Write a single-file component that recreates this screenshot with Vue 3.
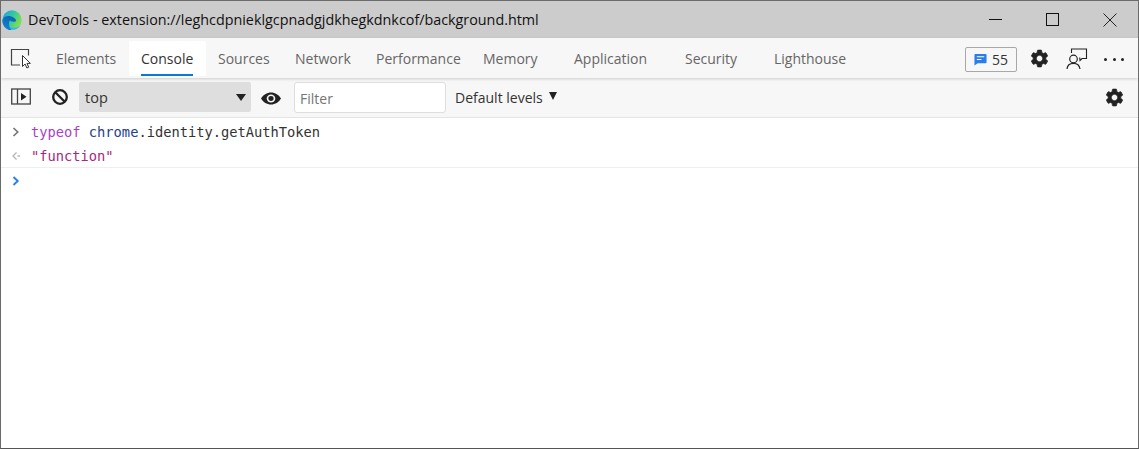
<script setup>
const tabs = [
  { name: 'Elements', width: 85 },
  { name: 'Console', width: 77, active: true },
  { name: 'Sources', width: 77 },
  { name: 'Network', width: 81 },
  { name: 'Performance', width: 107 },
  { name: 'Memory', width: 91 },
  { name: 'Application', width: 111 },
  { name: 'Security', width: 89 },
  { name: 'Lighthouse', width: 100 },
]
const gearPath = 'M19.14 12.94c.04-.3.06-.61.06-.94 0-.32-.02-.64-.07-.94l2.03-1.58c.18-.14.23-.41.12-.61l-1.92-3.32c-.12-.22-.37-.29-.59-.22l-2.39.96c-.5-.38-1.03-.7-1.62-.94l-.36-2.54c-.04-.24-.24-.41-.48-.41h-3.84c-.24 0-.43.17-.47.41l-.36 2.54c-.59.24-1.13.57-1.62.94l-2.39-.96c-.22-.08-.47 0-.59.22L2.74 8.87c-.12.21-.08.47.12.61l2.03 1.58c-.05.3-.09.63-.09.94s.02.64.07.94l-2.03 1.58c-.18.14-.23.41-.12.61l1.92 3.32c.12.22.37.29.59.22l2.39-.96c.5.38 1.03.7 1.62.94l.36 2.54c.05.24.24.41.48.41h3.84c.24 0 .44-.17.47-.41l.36-2.54c.59-.24 1.13-.56 1.62-.94l2.39.96c.22.08.47 0 .59-.22l1.92-3.32c.12-.22.07-.47-.12-.61l-2.01-1.58zM12 15.6c-1.98 0-3.6-1.62-3.6-3.6s1.62-3.6 3.6-3.6 3.6 1.62 3.6 3.6-1.62 3.6-3.6 3.6z'
</script>

<template>
  <div class="window">
    <header class="titlebar">
      <svg class="edge" viewBox="0 0 20 20" width="20" height="20">
        <defs>
          <linearGradient id="edgeGreen" x1="0.1" y1="0.1" x2="0.95" y2="0.55">
            <stop offset="0" stop-color="#1fa6d8" />
            <stop offset="0.5" stop-color="#35c9a0" />
            <stop offset="1" stop-color="#7ede4e" />
          </linearGradient>
          <linearGradient id="edgeBlue" x1="0.7" y1="0" x2="0.2" y2="1">
            <stop offset="0" stop-color="#0c62b0" />
            <stop offset="1" stop-color="#1086d8" />
          </linearGradient>
        </defs>
        <circle cx="10" cy="10" r="9.700" fill="url(#edgeGreen)" />
        <path d="M.4 10.500C1.200 7 5 5.500 8.500 6.300c2.800.6 5.200 2.400 5.500 4.200.2 1.100-1.400 1.300-2.900 1.200-1.600-.1-2.900-.6-3-1.500-.6.8-1.400 2.400-1 4.600.4 2.300 1.600 4 3 5.800C4.500 20.500.2 16 .4 10.500z" fill="url(#edgeBlue)" />
        <path d="M10.600 19.700c-2-1-3.300-2.300-4-4.200 1.800 1.800 4.500 2.600 7 2.200 1.900-.3 3.700-1.300 5-2.800-1.500 3-4.500 4.900-8 4.800z" fill="#35b4ee" />
      </svg>
      <span class="title">DevTools - extension://leghcdpnieklgcpnadgjdkhegkdnkcof/background.html</span>
      <div class="winbtns">
        <svg viewBox="0 0 14 14" width="14" height="14"><path d="M0 6.500h13" stroke="#111" fill="none" /></svg>
        <svg viewBox="0 0 14 14" width="14" height="14"><rect x=".5" y=".5" width="12" height="12" stroke="#111" fill="none" /></svg>
        <svg viewBox="0 0 14 14" width="14" height="14"><path d="M.5 .5l13 13M13.500 .5l-13 13" stroke="#222" fill="none" /></svg>
      </div>
    </header>

    <nav class="tabbar">
      <svg class="inspect" viewBox="0 0 22 22" width="22" height="22">
        <path d="M10 17H1.500V1.500h17V7.500" fill="none" stroke="#444" stroke-width="1.200" />
        <path d="M12.500 7.500v11l2.600-2.500 1.800 4 1.800-.8-1.700-3.800h3.400z" fill="#fff" stroke="#333" stroke-width="1" stroke-linejoin="round" />
      </svg>
      <div v-for="tab in tabs" :key="tab.name" class="tab" :class="{ active: tab.active }" :style="{ width: tab.width + 'px' }">
        <span class="tabtext">{{ tab.name }}</span>
      </div>
      <div class="spacer"></div>
      <div class="issues">
        <svg viewBox="0 0 14 14" width="13" height="13"><path d="M1.500 1h11a1 1 0 0 1 1 1v8a1 1 0 0 1-1 1H4l-3.500 2.500V2a1 1 0 0 1 1-1z" fill="#2b7de9" /><path d="M3 4h8M3 7h5" stroke="#fff" stroke-width="1.200" /></svg>
        <span>55</span>
      </div>
      <svg class="gear g1" viewBox="0 0 24 24" width="21" height="21"><path :d="gearPath" fill="#222" stroke="#222" stroke-width=".8" /></svg>
      <svg class="feedback" viewBox="0 0 22 22" width="22" height="22">
        <path d="M5.500 5V1h15v9.500h-4.500l-2 2-.3-3" fill="none" stroke="#222" stroke-width="1.100" />
        <circle cx="7.500" cy="11" r="3.800" fill="none" stroke="#222" stroke-width="1.200" />
        <path d="M1 21c.3-3.500 2.500-5.700 6.500-5.700s6 2.200 6.500 5.700" fill="none" stroke="#222" stroke-width="1.200" />
      </svg>
      <div class="dots"><i></i><i></i><i></i></div>
    </nav>

    <div class="toolbar">
      <svg class="sidebar" viewBox="0 0 20 18" width="20" height="18">
        <rect x=".7" y="1" width="18.600" height="15" fill="none" stroke="#444" stroke-width="1.300" />
        <path d="M6.500 1v15" stroke="#444" stroke-width="1.300" />
        <path d="M10 5l5.500 3.700L10 12.500z" fill="#222" />
      </svg>
      <svg class="clear" viewBox="0 0 18 18" width="18" height="18">
        <circle cx="9" cy="9" r="6.800" fill="none" stroke="#222" stroke-width="2.300" />
        <path d="M4.500 4.500l9 9" stroke="#222" stroke-width="2.300" />
      </svg>
      <div class="context"><span>top</span><b class="caret"></b></div>
      <svg class="eye" viewBox="0 0 20 14" width="20" height="13" preserveAspectRatio="none">
        <path d="M0 7c2.200-4 5.800-6.500 10-6.500S17.800 3 20 7c-2.200 4-5.800 6.500-10 6.500S2.200 11 0 7z" fill="#222" />
        <circle cx="10" cy="7" r="4.300" fill="#f7f7f7" />
        <circle cx="10" cy="7" r="2.600" fill="#222" />
      </svg>
      <div class="filter">Filter</div>
      <div class="levels"><span>Default levels</span><b class="caret small"></b></div>
      <div class="spacer"></div>
      <svg class="gear g2" viewBox="0 0 24 24" width="21" height="21"><path :d="gearPath" fill="#222" stroke="#222" stroke-width=".8" /></svg>
    </div>

    <main class="console">
      <div class="line first">
        <svg class="chev" viewBox="0 0 8 10" width="8" height="10"><path d="M1.500 1l4.200 4-4.200 4" fill="none" stroke="#777" stroke-width="1.700" /></svg>
        <code><span class="kw">typeof</span> <span class="var">chrome</span>.identity.getAuthToken</code>
      </div>
      <div class="line second">
        <svg class="chev" viewBox="0 0 8 10" width="8" height="10"><path d="M4.500 1.500L1 5l3.500 3.500M5.500 5H8" fill="none" stroke="#b5b5b5" stroke-width="1.300" /></svg>
        <code class="str">"function"</code>
      </div>
      <div class="line prompt">
        <svg class="chev" viewBox="0 0 8 10" width="8" height="10"><path d="M1.500 1l4.200 4-4.200 4" fill="none" stroke="#2b7de9" stroke-width="1.900" /></svg>
      </div>
    </main>
  </div>
</template>

<style>
html, body { margin: 0; background: #fff; overflow: hidden; }
</style>

<style scoped>
.window {
  width: 1139px;
  height: 449px;
  box-sizing: border-box;
  border: 1px solid #6b6b6b;
  border-bottom-color: #555;
  display: flex;
  flex-direction: column;
  font-family: "Open Sans", "Noto Sans", sans-serif;
  overflow: hidden;
  background: #fff;
}
.titlebar {
  height: 37px;
  flex: none;
  background: #cccccc;
  display: flex;
  align-items: center;
  padding-left: 1px;
  color: #111;
}
.edge { flex: none; margin-right: 6px; }
.title { font-size: 14.330px; white-space: nowrap; }
.winbtns { margin-left: auto; display: flex; align-items: center; gap: 43px; padding-right: 21px; }
.tabbar {
  height: 40px;
  flex: none;
  background: #f7f7f7;
  display: flex;
  align-items: stretch;
  box-shadow: 0 1px 3px rgba(0, 0, 0, .18);
  position: relative;
  z-index: 1;
}
.inspect { margin: 10px 12px 0 9px; flex: none; }
.tab {
  box-sizing: border-box;
  margin: 3px 0 2px;
  padding: 0 0 0 12px;
  font-size: 14px;
  color: #666;
  display: flex;
  align-items: center;
  flex: none;
}
.tab.active { background: #fff; color: #333; position: relative; border-radius: 2px; }
.tab.active::after {
  content: "";
  position: absolute;
  left: 12px;
  width: 52px;
  bottom: 0;
  height: 2px;
  background: #0a78d7;
}
.spacer { flex: 1; }
.issues {
  width: 52px;
  height: 25px;
  margin: 9px 0 0 0;
  box-sizing: border-box;
  border: 1px solid #a8a8a8;
  border-radius: 2px;
  display: flex;
  align-items: center;
  gap: 5px;
  padding-left: 8px;
  font-size: 14px;
  color: #333;
  flex: none;
}
.gear { flex: none; }
.g1 { margin: 10px 0 0 12px; }
.feedback { margin: 10px 0 0 16px; flex: none; }
.dots { display: flex; gap: 5.500px; margin: 20px 14px 0 16px; }
.dots i { width: 3px; height: 3px; border-radius: 50%; background: #222; display: block; }
.toolbar {
  height: 40px;
  flex: none;
  box-sizing: border-box;
  background: #f7f7f7;
  border-bottom: 1px solid #e4e4e4;
  padding-bottom: 1px;
  display: flex;
  align-items: center;
}
.sidebar { margin-left: 10px; flex: none; }
.clear { margin-left: 20px; flex: none; }
.context {
  width: 172px;
  height: 30px;
  margin-left: 10px;
  box-sizing: border-box;
  background: #dedede;
  border-radius: 2px;
  display: flex;
  align-items: center;
  justify-content: space-between;
  padding: 0 5px 0 6px;
  font-size: 14.500px;
  color: #333;
  flex: none;
}
.caret {
  width: 0;
  height: 0;
  border-left: 5px solid transparent;
  border-right: 5px solid transparent;
  border-top: 7px solid #222;
  display: block;
}
.caret.small { margin-left: 6px; margin-top: -2px; border-left-width: 4.500px; border-right-width: 4.500px; border-top-width: 8px; }
.eye { margin-left: 10px; margin-top: 2px; flex: none; }
.filter {
  margin-left: 13px;
  width: 152px;
  height: 31px;
  box-sizing: border-box;
  background: #fff;
  border: 1px solid #dedede;
  border-radius: 3px;
  padding: 6px 0 0 5px;
  font-size: 14px;
  color: #757575;
  flex: none;
}
.levels {
  margin-left: 9px;
  display: flex;
  align-items: center;
  font-size: 14px;
  color: #333;
}
.g2 { margin-right: 13px; }
.console { flex: 1; background: #fff; }
.line {
  display: flex;
  align-items: center;
  position: relative;
  padding-left: 30px;
  font-family: "DejaVu Sans Mono", monospace;
  font-size: 13.720px;
  color: #333;
  white-space: pre;
}
.line code { font: inherit; }
.chev { position: absolute; left: 11px; }
.first { height: 27px; padding-top: 1px; box-sizing: border-box; }
.second { height: 22px; border-bottom: 1px solid #efefef; }
.prompt { height: 25px; }
.kw { color: #aa3fc4; }
.var { color: #24408f; }
.str { color: #a52a7d; }
</style>
